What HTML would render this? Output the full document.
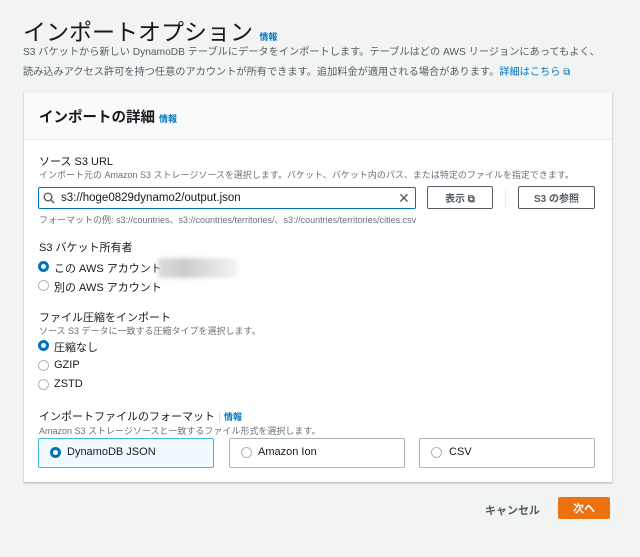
<!DOCTYPE html>
<html><head><meta charset="utf-8"><style>
*{box-sizing:border-box;margin:0;padding:0}
body{width:640px;height:557px;background:#f2f3f3;font-family:"Liberation Sans","Noto Sans CJK JP",sans-serif;color:#16191f;position:relative;overflow:hidden}
.a{position:absolute;white-space:nowrap}
.info{color:#0073bb;font-size:9px;font-weight:bold}
.panel{position:absolute;left:24px;top:92px;width:588px;height:390px;background:#fff;box-shadow:0 1px 2px rgba(0,28,36,.3);}
.hdr{position:absolute;left:0;top:0;width:100%;height:48px;background:#fafafa;border-bottom:1px solid #eaeded}
.lbl{font-size:11px;color:#16191f}
.sub{font-size:9px;color:#687078}
.r{width:11px;height:11px;border-radius:50%;border:1px solid #aab7b8;background:#fff;position:absolute}
.r.on{border:3px solid #0073bb}
.btn{position:absolute;border:1px solid #545b64;border-radius:2px;background:#fff;font-size:10px;font-weight:bold;color:#545b64;display:flex;align-items:center;justify-content:center}
.tile{position:absolute;top:438px;height:30px;width:176px;border:1px solid #aab7b8;border-radius:2px;background:#fff}
</style></head><body>
<div class="a" style="left:23px;top:13px;font-size:23px;">インポートオプション <span class="info" style="font-size:9px">情報</span></div>
<div class="a" style="left:23px;top:43px;font-size:10.2px;color:#545b64;">S3 バケットから新しい DynamoDB テーブルにデータをインポートします。テーブルはどの AWS リージョンにあってもよく、</div>
<div class="a" style="left:23px;top:63px;font-size:10.2px;color:#545b64;">読み込みアクセス許可を持つ任意のアカウントが所有できます。追加料金が適用される場合があります。<span style="color:#0073bb">詳細はこちら ⧉</span></div>
<div class="panel"><div class="hdr"></div></div>
<div class="a" style="left:39px;top:106px;font-size:14.5px;font-weight:bold">インポートの詳細 <span class="info">情報</span></div>
<div class="a lbl" style="left:39px;top:153px">ソース S3 URL</div>
<div class="a sub" style="left:39px;top:168px">インポート元の Amazon S3 ストレージソースを選択します。バケット、バケット内のパス、または特定のファイルを指定できます。</div>
<div class="a" style="left:38px;top:187px;width:378px;height:22px;border:1px solid #0073bb;border-radius:2px;background:#fff"></div>
<svg class="a" style="left:43px;top:192px" width="12" height="12" viewBox="0 0 12 12"><circle cx="5" cy="5" r="3.8" fill="none" stroke="#545b64" stroke-width="1.4"/><path d="M8 8l3 3" stroke="#545b64" stroke-width="1.4"/></svg>
<div class="a" style="left:61px;top:192px;font-size:11.5px">s3://hoge0829dynamo2/output.json</div>
<div class="a" style="left:398px;top:190px;font-size:14px;color:#545b64">✕</div>
<div class="btn" style="left:427px;top:186px;width:66px;height:23px">表示&nbsp;⧉</div>
<div class="a" style="left:505px;top:188px;width:1px;height:20px;background:#eaeded"></div>
<div class="btn" style="left:518px;top:186px;width:77px;height:23px">S3 の参照</div>
<div class="a sub" style="left:39px;top:213px">フォーマットの例: s3://countries、s3://countries/territories/、s3://countries/territories/cities.csv</div>
<div class="a lbl" style="left:39px;top:239px">S3 バケット所有者</div>
<div class="r on" style="left:38px;top:261px"></div><div class="a lbl" style="left:54px;top:260px">この AWS アカウント</div>
<div class="a" style="left:158px;top:258px;width:80px;height:20px;background:linear-gradient(90deg,#ddd,#ccc,#e0e0e0,#f5f5f5);filter:blur(2px)"></div>
<div class="r" style="left:38px;top:280px"></div><div class="a lbl" style="left:54px;top:279px">別の AWS アカウント</div>
<div class="a lbl" style="left:39px;top:309px">ファイル圧縮をインポート</div>
<div class="a sub" style="left:39px;top:324px">ソース S3 データに一致する圧縮タイプを選択します。</div>
<div class="r on" style="left:38px;top:340px"></div><div class="a lbl" style="left:54px;top:339px">圧縮なし</div>
<div class="r" style="left:38px;top:360px"></div><div class="a lbl" style="left:54px;top:359px">GZIP</div>
<div class="r" style="left:38px;top:379px"></div><div class="a lbl" style="left:54px;top:378px">ZSTD</div>
<div class="a lbl" style="left:39px;top:408px">インポートファイルのフォーマット <span style="color:#d5dbdb">|</span> <span class="info">情報</span></div>
<div class="a sub" style="left:39px;top:424px">Amazon S3 ストレージソースと一致するファイル形式を選択します。</div>
<div class="tile" style="left:38px;border-color:#44b9d6;background:#f1faff"></div>
<div class="r on" style="left:50px;top:447px"></div><div class="a lbl" style="left:67px;top:446px">DynamoDB JSON</div>
<div class="tile" style="left:229px"></div>
<div class="r" style="left:241px;top:447px"></div><div class="a lbl" style="left:258px;top:446px">Amazon Ion</div>
<div class="tile" style="left:419px"></div>
<div class="r" style="left:431px;top:447px"></div><div class="a lbl" style="left:449px;top:446px">CSV</div>
<div class="a" style="left:485px;top:502px;font-size:11px;font-weight:bold;color:#545b64">キャンセル</div>
<div class="a" style="left:558px;top:497px;width:52px;height:22px;background:#ec7211;border-radius:2px;color:#fff;font-size:11px;font-weight:bold;display:flex;align-items:center;justify-content:center">次へ</div>
</body></html>
